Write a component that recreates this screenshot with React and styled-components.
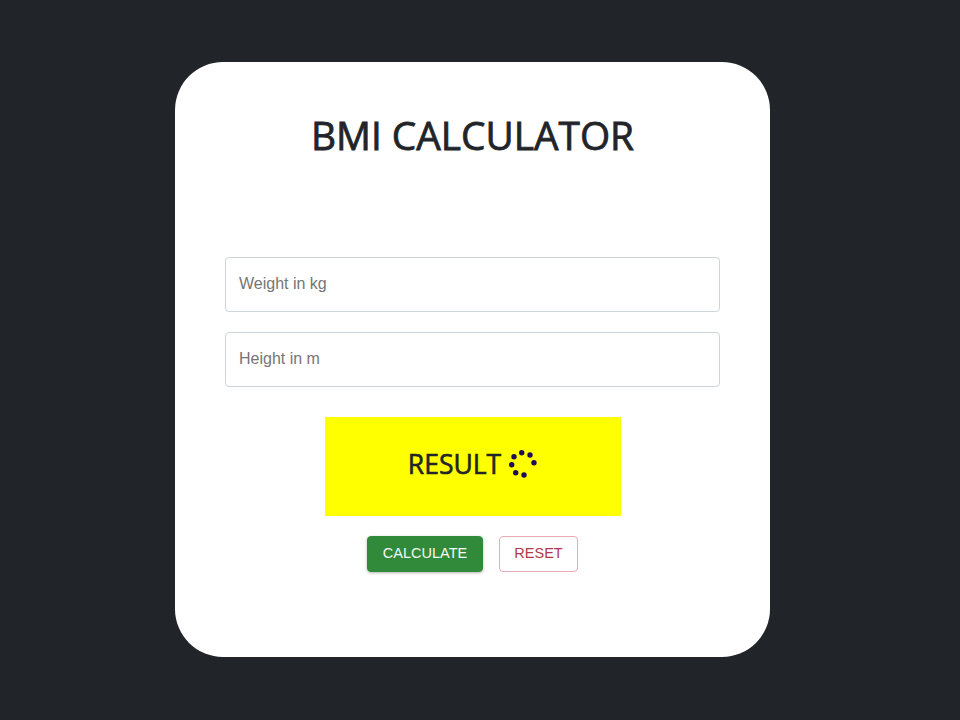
import React from "react";
import styled, { createGlobalStyle } from "styled-components";

const GlobalStyle = createGlobalStyle`
  * { box-sizing: border-box; }
  html, body { margin: 0; background: #212529; }
`;

const Page = styled.div`
  width: 960px;
  height: 720px;
  padding: 62px 0 0 175px;
  background: #212529;
  overflow: hidden;
`;

const Card = styled.div`
  width: 595px;
  height: 595px;
  padding: 43px 50px 0;
  background: #fff;
  border-radius: 48px;
  display: flex;
  flex-direction: column;
  align-items: center;
`;

const Title = styled.h1`
  margin: 0 0 92px;
  height: 60px;
  line-height: 60px;
  font-family: "Open Sans", sans-serif;
  font-size: 38.8px;
  font-weight: 400;
  -webkit-text-stroke: 0.8px #212529;
  color: #212529;
`;

const Input = styled.input`
  display: block;
  width: 100%;
  height: 55px;
  margin-bottom: 20px;
  padding: 0 13px 2px;
  background: #fff;
  border: 1px solid #ced4da;
  border-radius: 4px;
  font-family: "Liberation Sans", sans-serif;
  font-size: 16px;
  outline: none;
  &::placeholder { color: #757575; opacity: 1; }
`;

const ResultBox = styled.div`
  width: 296px;
  height: 99px;
  margin: 10px 0 0 1px;
  padding-bottom: 6px;
  background: #ffff00;
  display: flex;
  align-items: center;
  justify-content: center;
  gap: 7px;
  font-family: "Open Sans", sans-serif;
  font-size: 26.5px;
  font-weight: 400;
  -webkit-text-stroke: 0.6px #212529;
  color: #212529;
`;

const Buttons = styled.div`
  display: flex;
  gap: 16px;
  margin-top: 20px;
`;

const Button = styled.button`
  height: 36px;
  width: ${(p) => p.$width}px;
  padding: 0 0 2px;
  border-radius: 4px;
  font-family: "Liberation Sans", sans-serif;
  font-size: 14.5px;
  background: ${(p) => (p.$filled ? "#318a39" : "#fff")};
  color: ${(p) => (p.$filled ? "#f4f8f4" : "#b23a48")};
  border: 1px solid ${(p) => (p.$filled ? "#318a39" : "#e8aab3")};
  box-shadow: ${(p) => (p.$filled ? "0 1px 3px rgba(0,0,0,.3)" : "none")};
`;

const dots = [
  [14, 15.7],
  [21.7, 11.7],
  [30, 14],
  [34, 21.7],
  [24, 34],
  [15.7, 31.7],
  [11.7, 23.7],
];

function Spinner() {
  return (
    <svg width="30" height="30" viewBox="8 8 30 30">
      {dots.map(([cx, cy]) => (
        <circle key={`${cx}-${cy}`} cx={cx} cy={cy} r="2.7" fill="#1f0a5c" />
      ))}
    </svg>
  );
}

export default function App() {
  return (
    <>
      <GlobalStyle />
      <Page>
        <Card>
          <Title>BMI CALCULATOR</Title>
          <Input placeholder="Weight in kg" />
          <Input placeholder="Height in m" />
          <ResultBox>
            RESULT <Spinner />
          </ResultBox>
          <Buttons>
            <Button $filled $width={116}>CALCULATE</Button>
            <Button $width={79}>RESET</Button>
          </Buttons>
        </Card>
      </Page>
    </>
  );
}
